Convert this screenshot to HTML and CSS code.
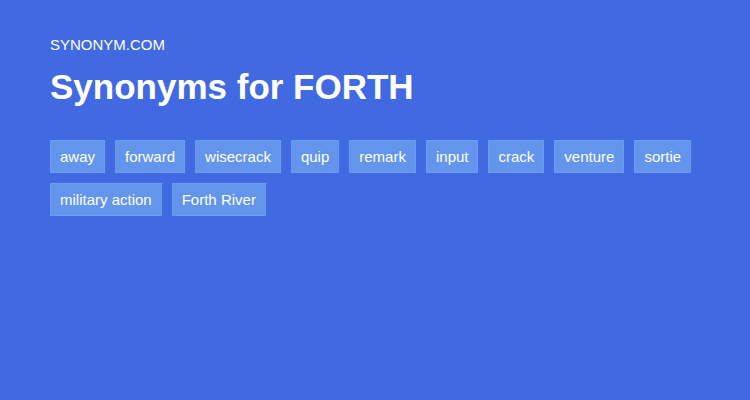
FILE: index.html
```html
<!DOCTYPE html>
<html>
<head>
<meta charset="utf-8">
<link rel="stylesheet" href="styles.css">
</head>
<body>
<div class="page">
  <div class="brand">SYNONYM.COM</div>
  <h1 class="title">Synonyms for FORTH</h1>
  <ul class="chips">
    <li class="chip">away</li>
    <li class="chip">forward</li>
    <li class="chip">wisecrack</li>
    <li class="chip">quip</li>
    <li class="chip">remark</li>
    <li class="chip">input</li>
    <li class="chip">crack</li>
    <li class="chip">venture</li>
    <li class="chip">sortie</li>
    <li class="chip">military action</li>
    <li class="chip">Forth River</li>
  </ul>
</div>
</body>
</html>
```
FILE: styles.css
```css
html, body {
  margin: 0;
  padding: 0;
  width: 750px;
  height: 400px;
  background: #4169e1;
  overflow: hidden;
}
.page {
  padding: 36px 50px 0 50px;
  font-family: "Liberation Sans", Arial, sans-serif;
  color: #ffffff;
}
.brand {
  font-size: 15px;
  line-height: 17px;
}
.title {
  margin: 14px 0 0 0;
  font-size: 35px;
  font-weight: bold;
  line-height: 40px;
}
.chips {
  list-style: none;
  margin: 33px 0 0 0;
  padding: 0;
  display: flex;
  flex-wrap: wrap;
  gap: 10px;
  width: 650px;
}
.chip {
  font-size: 15px;
  line-height: 17px;
  padding: 7px 9px;
  background: #6495ed;
  border: 1px solid #6d9bee;
}
```
